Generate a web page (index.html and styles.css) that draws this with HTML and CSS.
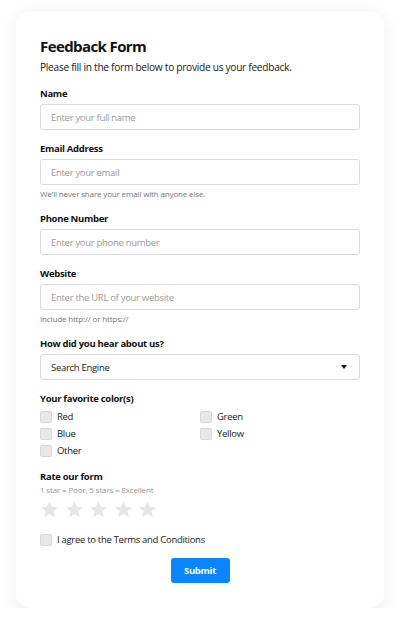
FILE: index.html
```html
<!DOCTYPE html>
<html lang="en">
<head>
<meta charset="utf-8">
<title>Feedback Form</title>
<link rel="stylesheet" href="styles.css">
</head>
<body>
<form class="card">
  <h1 class="title">Feedback Form</h1>
  <p class="subtitle">Please fill in the form below to provide us your feedback.</p>

  <div class="field">
    <label class="label">Name</label>
    <div class="input placeholder">Enter your full name</div>
  </div>

  <div class="field">
    <label class="label">Email Address</label>
    <div class="input placeholder">Enter your email</div>
    <div class="help">We'll never share your email with anyone else.</div>
  </div>

  <div class="field">
    <label class="label">Phone Number</label>
    <div class="input placeholder">Enter your phone number</div>
  </div>

  <div class="field">
    <label class="label">Website</label>
    <div class="input placeholder">Enter the URL of your website</div>
    <div class="help">Include http:// or https://</div>
  </div>

  <div class="field">
    <label class="label">How did you hear about us?</label>
    <div class="input select">
      <span>Search Engine</span>
      <span class="caret"></span>
    </div>
  </div>

  <div class="field colors">
    <label class="label label-tight">Your favorite color(s)</label>
    <div class="checks">
      <div class="check"><span class="box"></span>Red</div>
      <div class="check"><span class="box"></span>Green</div>
      <div class="check"><span class="box"></span>Blue</div>
      <div class="check"><span class="box"></span>Yellow</div>
      <div class="check"><span class="box"></span>Other</div>
    </div>
  </div>

  <div class="field rating">
    <label class="label label-flat">Rate our form</label>
    <div class="help help-flat">1 star = Poor, 5 stars = Excellent</div>
    <div class="stars">
      <svg class="star" viewBox="0 0 24 24"><path d="M12 1.5l3.1 7.1 7.6.7-5.8 5 1.8 7.5L12 17.8 5.3 21.8l1.8-7.5-5.8-5 7.6-.7z"/></svg>
      <svg class="star" viewBox="0 0 24 24"><path d="M12 1.5l3.1 7.1 7.6.7-5.8 5 1.8 7.5L12 17.8 5.3 21.8l1.8-7.5-5.8-5 7.6-.7z"/></svg>
      <svg class="star" viewBox="0 0 24 24"><path d="M12 1.5l3.1 7.1 7.6.7-5.8 5 1.8 7.5L12 17.8 5.3 21.8l1.8-7.5-5.8-5 7.6-.7z"/></svg>
      <svg class="star" viewBox="0 0 24 24"><path d="M12 1.5l3.1 7.1 7.6.7-5.8 5 1.8 7.5L12 17.8 5.3 21.8l1.8-7.5-5.8-5 7.6-.7z"/></svg>
      <svg class="star" viewBox="0 0 24 24"><path d="M12 1.5l3.1 7.1 7.6.7-5.8 5 1.8 7.5L12 17.8 5.3 21.8l1.8-7.5-5.8-5 7.6-.7z"/></svg>
    </div>
  </div>

  <div class="check terms"><span class="box"></span>I agree to the Terms and Conditions</div>

  <div class="actions">
    <button type="button" class="submit">Submit</button>
  </div>
</form>
</body>
</html>
```

FILE: styles.css
```css
* { box-sizing: border-box; }

body {
  margin: 0;
  background: #ffffff;
  font-family: "Open Sans", "Noto Sans", "Liberation Sans", sans-serif;
  color: #1a1a1a;
}

.card {
  margin: 11px 16px 0;
  width: 368px;
  padding: 24px 24px 25px;
  background: #fff;
  border-radius: 14px;
  box-shadow: 0 4px 18px rgba(0, 0, 0, 0.08);
}

.title {
  margin: 0;
  font-size: 15px;
  line-height: 22px;
  font-weight: 700;
  letter-spacing: -0.6px;
  color: #111;
}

.subtitle {
  margin: 3px 0 11px;
  font-size: 10.2px;
  line-height: 15px;
  letter-spacing: -0.3px;
  color: #222;
}

.field { margin-bottom: 11px; }
.colors { margin-bottom: 10px; }

.label {
  display: block;
  padding-top: 1px;
  font-size: 9.5px;
  line-height: 14px;
  font-weight: 700;
  letter-spacing: -0.3px;
  color: #111;
  margin-bottom: 3px;
}
.label-tight { margin-bottom: 2px; }
.label-flat { margin-bottom: 0; }

.input {
  height: 26px;
  border: 1px solid #dcdcdc;
  border-radius: 3px;
  padding: 0 10px;
  display: flex;
  align-items: center;
  font-size: 9.5px;
  letter-spacing: -0.3px;
  color: #222;
}
.placeholder { color: #9a9a9a; }

.select { justify-content: space-between; }
.caret {
  width: 0;
  height: 0;
  border-left: 3.5px solid transparent;
  border-right: 3.5px solid transparent;
  border-top: 4px solid #111;
  margin-right: 2px;
}

.help {
  margin-top: 3px;
  font-size: 8px;
  line-height: 12px;
  letter-spacing: -0.15px;
  color: #777;
}
.help-flat { margin-top: 0; color: #999; }

.checks {
  display: grid;
  grid-template-columns: 160px 1fr;
}

.check {
  display: flex;
  align-items: center;
  height: 17px;
  font-size: 9.5px;
  letter-spacing: -0.3px;
  color: #222;
}

.box {
  width: 12px;
  height: 12px;
  border: 1px solid #d8d8d8;
  background: #e8e8e8;
  border-radius: 2px;
  margin-right: 5px;
  flex: none;
}

.stars {
  display: flex;
  gap: 5.5px;
  margin-top: 4px;
}
.star {
  width: 19px;
  height: 19px;
  fill: #e6e6e6;
}

.rating { margin-bottom: 12px; }

.terms { margin-bottom: 10px; }

.actions {
  display: flex;
  justify-content: center;
}

.submit {
  width: 59px;
  height: 25px;
  border: none;
  border-radius: 3px;
  background: #0a84ff;
  color: #fff;
  font-family: inherit;
  font-size: 9.5px;
  letter-spacing: -0.3px;
  font-weight: 700;
  cursor: pointer;
}
```
